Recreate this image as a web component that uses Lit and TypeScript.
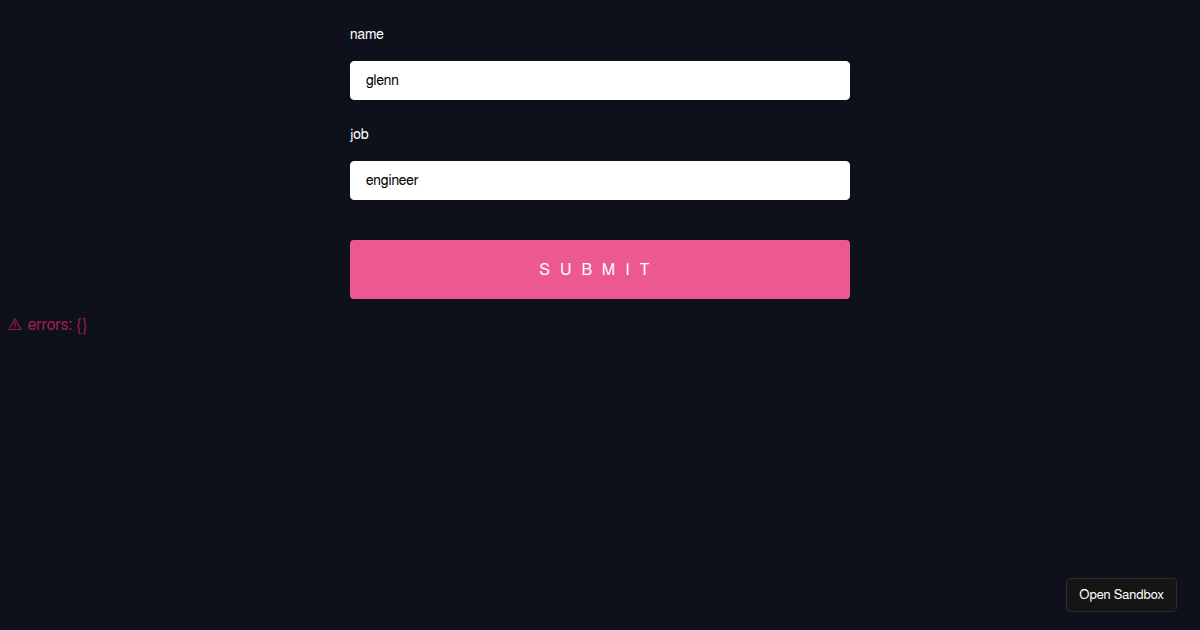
import { LitElement, html, css } from "lit";
import { customElement } from "lit/decorators.js";

@customElement("app-root")
export class AppRoot extends LitElement {
  static styles = css`
    :host {
      display: block;
      position: relative;
      height: 630px;
      background: #0e101c;
      color: #fff;
      font-family: FreeSans, "Liberation Sans", Arial, sans-serif;
      font-size: 14px;
      font-weight: 200;
      overflow: hidden;
    }
    form {
      width: 500px;
      margin: 0 auto;
      display: flex;
      flex-direction: column;
    }
    label {
      display: block;
      height: 18px;
      line-height: 18px;
      margin: 26px 0 17px;
    }
    input {
      display: block;
      width: 100%;
      height: 39px;
      box-sizing: border-box;
      background: #fff;
      color: #000;
      border: 1px solid #fff;
      border-radius: 4px;
      padding: 11px 15px 9px;
      font: inherit;
      outline: none;
    }
    button {
      margin-top: 40px;
      height: 59px;
      background: #ec5990;
      color: #fff;
      border: 0;
      border-radius: 4px;
      font: inherit;
      font-size: 16px;
      letter-spacing: 10px;
      text-transform: uppercase;
      padding: 0 1px 0 0;
    }
    .errors {
      margin: 16px 0 0 8px;
      font-size: 16px;
      line-height: 20px;
      color: #a01f4f;
    }
    .warn {
      margin-right: 2px;
    }
    .sandbox {
      position: absolute;
      right: 23px;
      bottom: 18px;
      width: 111px;
      height: 34px;
      box-sizing: border-box;
      padding-top: 2px;
      display: flex;
      align-items: center;
      justify-content: center;
      background: #151515;
      border: 1px solid #2f282c;
      border-radius: 4px;
      font-size: 13px;
      color: #fff;
    }
  `;

  render() {
    return html`
      <form>
        <label>name</label>
        <input .value=${"glenn"} />
        <label>job</label>
        <input .value=${"engineer"} />
        <button type="button">submit</button>
      </form>
      <div class="errors"><span class="warn">⚠</span> errors: {}</div>
      <div class="sandbox">Open Sandbox</div>
    `;
  }
}
